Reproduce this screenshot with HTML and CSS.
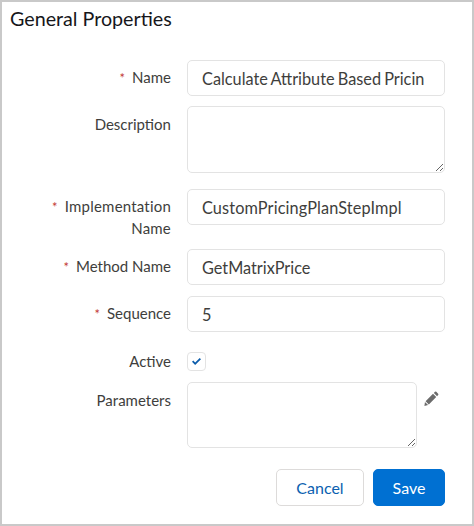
FILE: index.html
```html
<!DOCTYPE html>
<html lang="en">
<head>
<meta charset="utf-8">
<title>General Properties</title>
<link rel="stylesheet" href="styles.css">
</head>
<body>
<main class="panel">
  <h1 class="title">General Properties</h1>
  <form class="form">
    <div class="row row-name">
      <label class="label" for="f-name"><span class="req">*</span>Name</label>
      <input class="field" id="f-name" type="text" value="Calculate Attribute Based Pricin">
    </div>
    <div class="row row-desc">
      <label class="label label-area" for="f-desc">Description</label>
      <textarea class="field area area-desc" id="f-desc"></textarea>
    </div>
    <div class="row row-impl">
      <label class="label label-two" for="f-impl"><span class="req">*</span>Implementation Name</label>
      <input class="field field-wide" id="f-impl" type="text" value="CustomPricingPlanStepImpl">
    </div>
    <div class="row row-method">
      <label class="label" for="f-method"><span class="req">*</span>Method Name</label>
      <input class="field" id="f-method" type="text" value="GetMatrixPrice">
    </div>
    <div class="row row-seq">
      <label class="label" for="f-seq"><span class="req">*</span>Sequence</label>
      <input class="field" id="f-seq" type="text" value="5">
    </div>
    <div class="row row-active">
      <span class="label">Active</span>
      <span class="check">
        <svg class="check-icon" viewBox="0 0 12 10" aria-hidden="true"><path d="M1 5.4 L2.4 4 L4.5 6 L9.6 1 L11 2.4 L4.5 8.9 Z"/></svg>
      </span>
    </div>
    <div class="row row-params">
      <label class="label label-area" for="f-params">Parameters</label>
      <div class="param-wrap">
        <textarea class="field area area-params" id="f-params"></textarea>
        <svg class="pencil" viewBox="0 0 14 14" aria-hidden="true"><path d="M10.2 0.8 a1 1 0 0 1 1.3 0 l1.7 1.7 a1 1 0 0 1 0 1.3 l-1 1 l-3 -3 Z M8.4 2.6 l3 3 l-6.9 6.9 l-3 -3 Z M0.9 10.2 l2.9 2.9 l-3.4 0.8 Z"/></svg>
      </div>
    </div>
    <div class="actions">
      <button class="btn btn-cancel" type="button">Cancel</button>
      <button class="btn btn-save" type="button">Save</button>
    </div>
  </form>
</main>
</body>
</html>
```
FILE: styles.css
```css
* { box-sizing: border-box; }
html, body { margin: 0; padding: 0; background: #fff; }
body { width: 474px; height: 526px; overflow: hidden; font-family: "Lato", "Open Sans", sans-serif; color: #3e3e3c; }
.panel { width: 474px; height: 526px; border: 2px solid #c9c9c9; padding: 5px 0 0 8px; background: #fff; }
.title { margin: 0; font-size: 19.7px; line-height: 24px; font-weight: 400; color: #16161a; }
.form { display: flex; flex-direction: column; width: 435px; margin-top: 29px; }
.row { display: grid; grid-template-columns: 161px 258px; column-gap: 16px; align-items: center; }
.row-desc { margin-top: 10px; align-items: start; }
.row-impl { margin-top: 16px; align-items: start; }
.row-method { margin-top: 9px; }
.row-seq { margin-top: 11px; }
.row-active { margin-top: 19px; }
.row-params { margin-top: 10px; align-items: start; }
.label { font-size: 15px; line-height: 21px; text-align: right; color: #3e3e3c; }
.label-area { padding-top: 8px; }
.label-two { padding-top: 7px; padding-left: 22px; margin-bottom: 1px; letter-spacing: 0.2px; }
.req { color: #c23934; margin-right: 7px; font-size: 13px; }
.field { display: block; width: 258px; height: 36px; border: 1.5px solid #e3e3e3; border-radius: 5px; padding: 0 14px; background: #fff; font-family: inherit; font-size: 16.3px; word-spacing: -1px; color: #3e3e3c; outline: none; margin: 0; }
.field-wide { letter-spacing: 0.12px; }
.area { padding: 8px 14px; }
.area-desc { height: 67px; }
.area-params { width: 230px; height: 66px; }
.check { display: flex; align-items: center; justify-content: center; width: 19px; height: 19px; border: 1.5px solid #e3e3e3; border-radius: 4px; background: #fff; }
.check-icon { width: 11px; height: 9px; fill: #0b5cab; }
.param-wrap { display: flex; align-items: flex-start; gap: 7px; }
.pencil { width: 15px; height: 15px; margin-top: 9px; fill: #6b6b6b; }
.actions { display: flex; justify-content: flex-end; gap: 9px; margin-top: 21px; }
.btn { height: 37px; border-radius: 5px; font-family: inherit; font-size: 16px; padding: 0; }
.btn-cancel { width: 88px; background: #fff; border: 1.5px solid #dddbda; color: #0b5fb0; }
.btn-save { width: 72px; background: #0070d2; border: 1px solid #0070d2; color: #fff; }
```
